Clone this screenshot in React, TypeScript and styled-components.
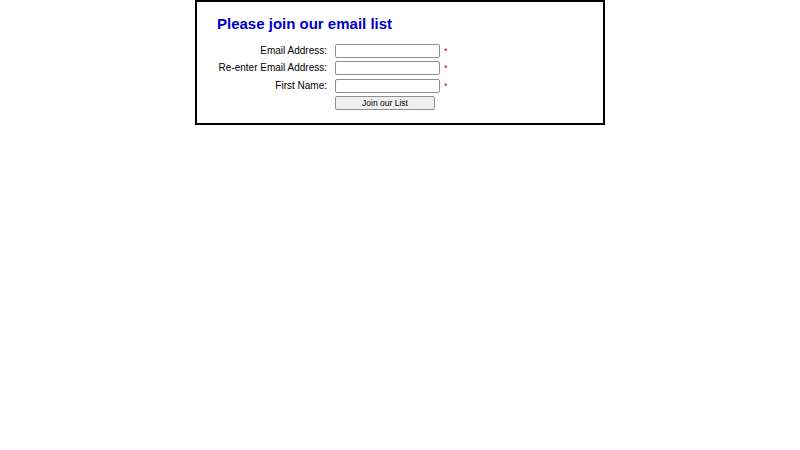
import React from 'react';
import styled, { createGlobalStyle } from 'styled-components';

const GlobalStyle = createGlobalStyle`
    body {
        margin: 0;
        background: #fff;
        font-family: "Liberation Sans", Arial, sans-serif;
    }
`;

const SignupBox = styled.div`
    box-sizing: border-box;
    width: 410px;
    margin: 0 auto;
    border: 2px solid #000;
    padding: 12px 20px 13px 20px;
`;

const Title = styled.h2`
    margin: 0 0 10px 0;
    font-size: 15px;
    line-height: 20px;
    font-weight: bold;
    color: #0000cc;
`;

const FormGrid = styled.form`
    display: grid;
    grid-template-columns: 110px auto;
    column-gap: 8px;
    row-gap: 3.3px;
    align-items: center;
`;

const Label = styled.label`
    text-align: right;
    font-size: 10px;
    line-height: 14px;
    color: #000;
    white-space: nowrap;
`;

const Field = styled.div`
    display: flex;
    align-items: center;
    gap: 4px;
`;

const TextInput = styled.input`
    box-sizing: border-box;
    width: 105px;
    height: 14px;
    margin: 0;
    padding: 0 2px;
    border: 1px solid #8f8f8f;
    border-radius: 2px;
    background: #fff;
    font-size: 10px;
`;

const Required = styled.span`
    color: #d00000;
    font-size: 9px;
    line-height: 9px;
    align-self: flex-start;
    margin-top: 3px;
`;

const SubmitButton = styled.button`
    grid-column: 2;
    box-sizing: border-box;
    width: 100px;
    height: 14px;
    margin: 0;
    padding: 0;
    border: 1px solid #8f8f8f;
    border-radius: 2px;
    background: #efefef;
    color: #000;
    font-family: "Liberation Sans", Arial, sans-serif;
    font-size: 8.5px;
    line-height: 12px;
`;

const fields = [
    { id: 'email', label: 'Email Address:' },
    { id: 'email2', label: 'Re-enter Email Address:' },
    { id: 'firstName', label: 'First Name:' },
];

export default function App() {
    return (
        <>
            <GlobalStyle />
            <SignupBox>
                <Title>Please join our email list</Title>
                <FormGrid onSubmit={(e) => e.preventDefault()}>
                    {fields.map((f) => (
                        <React.Fragment key={f.id}>
                            <Label htmlFor={f.id}>{f.label}</Label>
                            <Field>
                                <TextInput id={f.id} type="text" />
                                <Required>*</Required>
                            </Field>
                        </React.Fragment>
                    ))}
                    <SubmitButton type="submit">Join our List</SubmitButton>
                </FormGrid>
            </SignupBox>
        </>
    );
}
